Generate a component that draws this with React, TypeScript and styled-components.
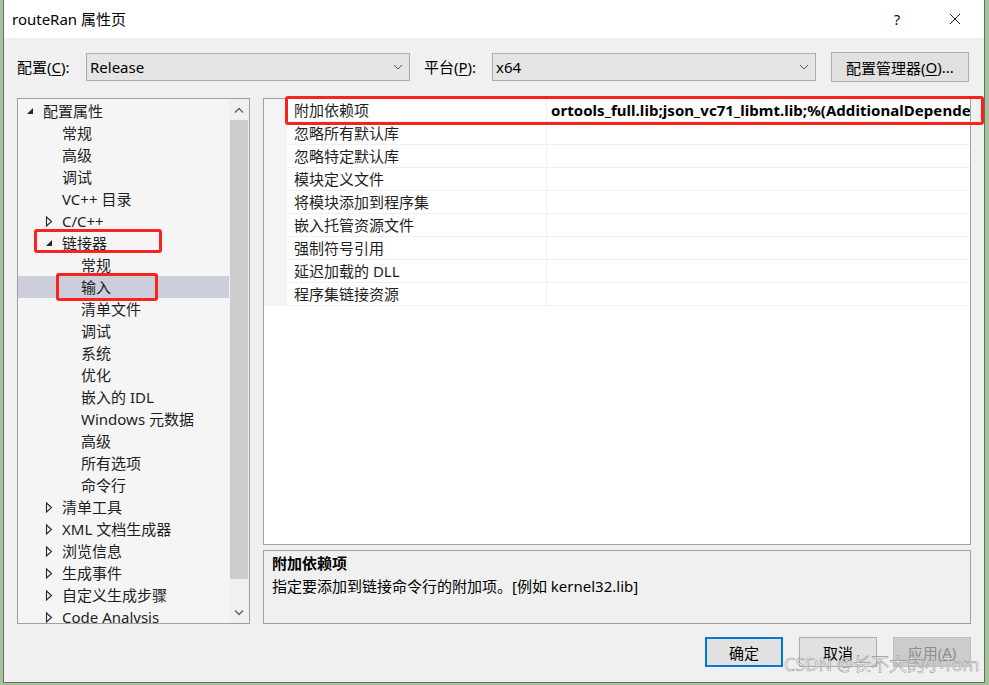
import React from 'react';
import styled, { createGlobalStyle } from 'styled-components';

const Global = createGlobalStyle`
  html, body { margin: 0; padding: 0; }
  body {
    background: #a3c39c;
    width: 989px;
    height: 685px;
    overflow: hidden;
    font-family: "Noto Sans", "Noto Sans CJK SC", sans-serif;
    font-size: 15px;
    color: #000;
  }
`;

const FONT = `"Noto Sans", "Noto Sans CJK SC", sans-serif`;

const Page = styled.div`
  position: relative;
  width: 989px;
  height: 685px;
  padding-left: 3px;
  box-sizing: border-box;
`;

const Window = styled.div`
  width: 982px;
  height: 683px;
  box-sizing: border-box;
  background: #f0f0f0;
  border: 1px solid #6b6b6b;
  border-top: none;
  display: flex;
  flex-direction: column;
`;

const TitleBar = styled.div`
  height: 38px;
  background: #ffffff;
  display: flex;
  align-items: center;
  flex-shrink: 0;
`;

const Title = styled.div`
  flex: 1;
  padding-left: 8px;
  font-size: 15px;
  line-height: 20px;
  color: #000;
`;

const CaptionButton = styled.div`
  width: 58px;
  height: 38px;
  display: flex;
  align-items: center;
  justify-content: center;
  font-size: 15px;
  color: #111;
`;

const Content = styled.div`
  flex: 1;
  display: flex;
  flex-direction: column;
  padding: 14px 13px 0 13px;
`;

const ConfigRow = styled.div`
  display: flex;
  align-items: center;
  height: 30px;
`;

const FieldLabel = styled.div<{ $w: number; $ml?: number }>`
  width: ${(p) => p.$w}px;
  margin-left: ${(p) => p.$ml ?? 0}px;
  font-size: 15px;
  line-height: 20px;
  white-space: nowrap;
`;

const U = styled.span`
  text-decoration: underline;
  text-underline-offset: 2px;
`;

const Combo = styled.div`
  width: 324px;
  height: 28px;
  box-sizing: border-box;
  border: 1px solid #adadad;
  background: #e5e5e5;
  display: flex;
  align-items: center;
  justify-content: space-between;
  padding: 0 6px 0 3px;
  font-size: 15px;
`;

const Spacer = styled.div<{ $w: number }>`
  width: ${(p) => p.$w}px;
  flex-shrink: 0;
`;

const PushButton = styled.div<{ $w: number; $primary?: boolean; $disabled?: boolean }>`
  width: ${(p) => p.$w}px;
  height: 30px;
  box-sizing: border-box;
  display: flex;
  align-items: center;
  justify-content: center;
  font-size: 15px;
  background: ${(p) => (p.$disabled ? '#cccccc' : '#e1e1e1')};
  color: ${(p) => (p.$disabled ? '#8c8c8c' : '#000')};
  border: ${(p) => (p.$primary ? '2px solid #0078d7' : p.$disabled ? '1px solid #bfbfbf' : '1px solid #adadad')};
`;

const Main = styled.div`
  margin-top: 16px;
  height: 526px;
  display: flex;
  gap: 13px;
`;

const TreePanel = styled.div`
  width: 233px;
  box-sizing: border-box;
  border: 1px solid #a0a0a0;
  background: #f5f5f5;
  display: flex;
  overflow: hidden;
`;

const TreeList = styled.div`
  flex: 1;
  padding-top: 1px;
  overflow: hidden;
`;

const TreeRow = styled.div<{ $level: number; $selected?: boolean }>`
  height: 22px;
  display: flex;
  align-items: center;
  padding-left: ${(p) => 7 + p.$level * 19}px;
  background: ${(p) => (p.$selected ? '#cccedb' : 'transparent')};
  color: #1e1e1e;
  font-size: 15px;
  line-height: 22px;
  white-space: nowrap;
`;

const Expander = styled.div`
  width: 18px;
  height: 22px;
  display: flex;
  align-items: center;
  padding-left: 1px;
  box-sizing: border-box;
  flex-shrink: 0;
`;

const ScrollBar = styled.div`
  width: 20px;
  background: #f0f0f0;
  display: flex;
  flex-direction: column;
  align-items: center;
`;

const ScrollArrow = styled.div`
  height: 21px;
  width: 20px;
  display: flex;
  align-items: center;
  justify-content: center;
  flex-shrink: 0;
`;

const ScrollTrack = styled.div`
  flex: 1;
  width: 100%;
  display: flex;
  justify-content: center;
`;

const Thumb = styled.div`
  width: 18px;
  height: 459px;
  background: #cdcdcd;
`;

const RightColumn = styled.div`
  width: 708px;
  display: flex;
  flex-direction: column;
  gap: 5px;
`;

const Grid = styled.div`
  flex: 1;
  box-sizing: border-box;
  border: 1px solid #a0a0a0;
  background: #ffffff;
  overflow: hidden;
`;

const GridRow = styled.div`
  display: grid;
  grid-template-columns: 23px 260px 1fr;
  height: 23px;
`;

const Gutter = styled.div`
  background: #f4f4f6;
`;

const NameCell = styled.div`
  box-sizing: border-box;
  border-bottom: 1px solid #eef0f3;
  border-right: 1px solid #eef0f3;
  padding-left: 7px;
  font-size: 15px;
  line-height: 22px;
  color: #1e1e1e;
  white-space: nowrap;
  overflow: hidden;
`;

const ValueCell = styled.div`
  box-sizing: border-box;
  border-bottom: 1px solid #eef0f3;
  padding-left: 4px;
  font-size: 15px;
  font-weight: 700;
  line-height: 22px;
  color: #000;
  white-space: nowrap;
  overflow: hidden;
  letter-spacing: 0.05px;
`;

const Desc = styled.div`
  height: 74px;
  box-sizing: border-box;
  border: 1px solid #a0a0a0;
  background: #f0f0f0;
  padding: 1px 8px 0 8px;
`;

const DescTitle = styled.div`
  font-size: 15px;
  font-weight: 700;
  line-height: 23px;
  color: #000;
`;

const DescText = styled.div`
  font-size: 15px;
  line-height: 23px;
  color: #000;
`;

const ButtonRow = styled.div`
  margin-top: 13px;
  display: flex;
  justify-content: flex-end;
  gap: 16px;
`;

const RedBox = styled.div`
  position: absolute;
  box-sizing: border-box;
  border: 3px solid #f7231c;
  border-radius: 3px;
`;

const Watermark = styled.div`
  position: absolute;
  left: 784px;
  top: 652px;
  font-family: ${FONT};
  font-size: 18px;
  line-height: 24px;
  color: rgba(255, 255, 255, 0.8);
  -webkit-text-stroke: 0.6px rgba(110, 110, 110, 0.7);
  white-space: nowrap;
`;

const Chevron = ({ up }: { up?: boolean }) => (
  <svg width="10" height="6" viewBox="0 0 10 6">
    <polyline
      points={up ? '1,5.5 5,1.5 9,5.5' : '1,0.5 5,4.5 9,0.5'}
      fill="none"
      stroke="#606060"
      strokeWidth="1.3"
    />
  </svg>
);

const ComboChevron = () => (
  <svg width="10" height="6" viewBox="0 0 10 6">
    <polyline points="1,1 5,5 9,1" fill="none" stroke="#5a5a5a" strokeWidth="1" />
  </svg>
);

const OpenTri = () => (
  <svg width="8" height="10" viewBox="0 0 8 10">
    <polygon points="7,2 7,8 1,8" fill="#262626" />
  </svg>
);

const ClosedTri = () => (
  <svg width="8" height="11" viewBox="0 0 8 11">
    <polygon points="1.5,1 6.5,5.5 1.5,10" fill="none" stroke="#262626" strokeWidth="1.1" />
  </svg>
);

type Node = { label: string; level: number; exp?: 'open' | 'closed'; selected?: boolean };

const tree: Node[] = [
  { label: '配置属性', level: 0, exp: 'open' },
  { label: '常规', level: 1 },
  { label: '高级', level: 1 },
  { label: '调试', level: 1 },
  { label: 'VC++ 目录', level: 1 },
  { label: 'C/C++', level: 1, exp: 'closed' },
  { label: '链接器', level: 1, exp: 'open' },
  { label: '常规', level: 2 },
  { label: '输入', level: 2, selected: true },
  { label: '清单文件', level: 2 },
  { label: '调试', level: 2 },
  { label: '系统', level: 2 },
  { label: '优化', level: 2 },
  { label: '嵌入的 IDL', level: 2 },
  { label: 'Windows 元数据', level: 2 },
  { label: '高级', level: 2 },
  { label: '所有选项', level: 2 },
  { label: '命令行', level: 2 },
  { label: '清单工具', level: 1, exp: 'closed' },
  { label: 'XML 文档生成器', level: 1, exp: 'closed' },
  { label: '浏览信息', level: 1, exp: 'closed' },
  { label: '生成事件', level: 1, exp: 'closed' },
  { label: '自定义生成步骤', level: 1, exp: 'closed' },
  { label: 'Code Analysis', level: 1, exp: 'closed' },
];

const props: { name: string; value?: string }[] = [
  { name: '附加依赖项', value: 'ortools_full.lib;json_vc71_libmt.lib;%(AdditionalDependencies)' },
  { name: '忽略所有默认库' },
  { name: '忽略特定默认库' },
  { name: '模块定义文件' },
  { name: '将模块添加到程序集' },
  { name: '嵌入托管资源文件' },
  { name: '强制符号引用' },
  { name: '延迟加载的 DLL' },
  { name: '程序集链接资源' },
];

export default function App() {
  return (
    <Page>
      <Global />
      <Window>
        <TitleBar>
          <Title>routeRan 属性页</Title>
          <CaptionButton>?</CaptionButton>
          <CaptionButton>
            <svg width="12" height="12" viewBox="0 0 12 12">
              <path d="M1 1 L11 11 M11 1 L1 11" stroke="#222" strokeWidth="1" />
            </svg>
          </CaptionButton>
        </TitleBar>
        <Content>
          <ConfigRow>
            <FieldLabel $w={69}>
              配置(<U>C</U>):
            </FieldLabel>
            <Combo>
              <span>Release</span>
              <ComboChevron />
            </Combo>
            <FieldLabel $w={68} $ml={14}>
              平台(<U>P</U>):
            </FieldLabel>
            <Combo>
              <span>x64</span>
              <ComboChevron />
            </Combo>
            <Spacer $w={15} />
            <PushButton $w={138}>
              配置管理器(<U>O</U>)...
            </PushButton>
          </ConfigRow>
          <Main>
            <TreePanel>
              <TreeList>
                {tree.map((n, i) => (
                  <TreeRow key={i} $level={n.level} $selected={n.selected}>
                    <Expander>
                      {n.exp === 'open' && <OpenTri />}
                      {n.exp === 'closed' && <ClosedTri />}
                    </Expander>
                    {n.label}
                  </TreeRow>
                ))}
              </TreeList>
              <ScrollBar>
                <ScrollArrow>
                  <Chevron up />
                </ScrollArrow>
                <ScrollTrack>
                  <Thumb />
                </ScrollTrack>
                <ScrollArrow>
                  <Chevron />
                </ScrollArrow>
              </ScrollBar>
            </TreePanel>
            <RightColumn>
              <Grid>
                {props.map((p, i) => (
                  <GridRow key={i}>
                    <Gutter />
                    <NameCell>{p.name}</NameCell>
                    <ValueCell>{p.value ?? ''}</ValueCell>
                  </GridRow>
                ))}
              </Grid>
              <Desc>
                <DescTitle>附加依赖项</DescTitle>
                <DescText>指定要添加到链接命令行的附加项。[例如 kernel32.lib]</DescText>
              </Desc>
            </RightColumn>
          </Main>
          <ButtonRow>
            <PushButton $w={78} $primary>确定</PushButton>
            <PushButton $w={78}>取消</PushButton>
            <PushButton $w={78} $disabled>
              应用(<U>A</U>)
            </PushButton>
          </ButtonRow>
        </Content>
      </Window>
      <RedBox style={{ left: 34, top: 229, width: 128, height: 24 }} />
      <RedBox style={{ left: 56, top: 273, width: 102, height: 28 }} />
      <RedBox style={{ left: 285, top: 96, width: 699, height: 29 }} />
      <Watermark>CSDN @长不大的小Tom</Watermark>
    </Page>
  );
}
